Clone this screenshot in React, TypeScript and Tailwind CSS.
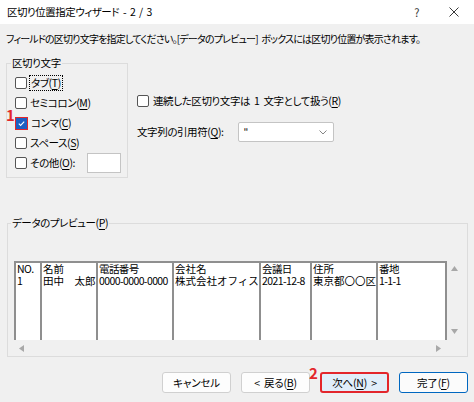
import React from 'react';

type Column = { width: string; head: string; value: string; latin?: boolean };

const columns: Column[] = [
  { width: 'w-[26px]', head: 'NO.', value: '1', latin: true },
  { width: 'w-[56px]', head: '名前', value: '田中　太郎' },
  { width: 'w-[76px]', head: '電話番号', value: '0000-0000-0000', latin: true },
  { width: 'w-[87px]', head: '会社名', value: '株式会社オフィス' },
  { width: 'w-[51px]', head: '会議日', value: '2021-12-8', latin: true },
  { width: 'w-[66px]', head: '住所', value: '東京都〇〇区' },
  { width: 'w-[70px]', head: '番地', value: '1-1-1', latin: true },
];

function Key({ children }: { children: React.ReactNode }) {
  return <span className="underline underline-offset-[2px]">{children}</span>;
}

function CheckBox({ checked = false }: { checked?: boolean }) {
  if (checked) {
    return (
      <span className="flex h-[13px] w-[13px] shrink-0 items-center justify-center border-[1.5px] border-[#e3262c] bg-[#1d5fc4]">
        <svg viewBox="0 0 10 10" className="h-[9px] w-[9px]">
          <path d="M2 5.2l2 2 4-4.4" fill="none" stroke="#fff" strokeWidth="1.2" />
        </svg>
      </span>
    );
  }
  return <span className="h-[12px] w-[12px] shrink-0 rounded-[2px] border border-[#555] bg-white" />;
}

function Arrow({ dir }: { dir: 'up' | 'down' | 'left' | 'right' }) {
  const points = {
    up: '0,5 3.5,0 7,5',
    down: '0,0 3.5,5 7,0',
    left: '5,0 0,3.5 5,7',
    right: '0,0 5,3.5 0,7',
  }[dir];
  const size = dir === 'up' || dir === 'down' ? 'h-[5px] w-[7px]' : 'h-[7px] w-[5px]';
  const box = dir === 'up' || dir === 'down' ? '0 0 7 5' : '0 0 5 7';
  return (
    <svg viewBox={box} className={size}>
      <polygon points={points} fill="#a8a8a8" />
    </svg>
  );
}

function Button({ children, variant = 'normal' }: { children: React.ReactNode; variant?: 'normal' | 'marked' | 'default' }) {
  const style =
    variant === 'marked'
      ? 'border-2 border-[#e3262c] bg-[#e1eefa]'
      : variant === 'default'
        ? 'border border-[#0067c0] bg-[#fbfbfb]'
        : 'border border-[#d0d0d0] bg-[#fdfdfd]';
  return (
    <div className={`relative flex h-[21px] w-[69px] items-center justify-center whitespace-pre rounded-[3px] tracking-[-0.2px] ${style}`}>
      {children}
    </div>
  );
}

export default function App() {
  return (
    <div className="flex h-[402px] w-[474px] flex-col overflow-hidden bg-[#f0f0f0] font-['Noto_Sans_CJK_JP','Noto_Sans',sans-serif] text-[10.5px] leading-[14px] tracking-[-0.4px] text-black [font-feature-settings:'palt'] [word-spacing:2px]">
      {/* title bar */}
      <div className="flex h-[24px] shrink-0 items-center bg-white pl-[7px]">
        <span className="whitespace-pre tracking-[-0.5px]">区切り位置指定ウィザード - 2 / 3</span>
        <span className="ml-auto mr-[30px] text-[11px] text-[#333]">?</span>
        <svg viewBox="0 0 10 10" className="mr-[15px] h-[10px] w-[10px]">
          <path d="M0.5 0.5l9 9M9.5 0.5l-9 9" stroke="#222" strokeWidth="0.9" />
        </svg>
      </div>

      <div className="flex flex-col pl-[6px] pt-[8px]">
        <p className="whitespace-nowrap text-[10px] tracking-[-0.8px]">
          フィールドの区切り文字を指定してください。[データのプレビュー] ボックスには区切り位置が表示されます。
        </p>

        <div className="mt-[10px] flex items-start gap-[9px]">
          <fieldset className="w-[122px] border border-[#dcdcdc]">
            <legend className="ml-[4px] px-[1px]">区切り文字</legend>
            <div className="flex flex-col pb-[4px] pl-[8px] pr-[6px] pt-[3px]">
              <div className="flex h-[20px] items-center gap-[2px]">
                <CheckBox />
                <span className="border border-dotted border-black px-[1px]">
                  タブ(<Key>T</Key>)
                </span>
              </div>
              <div className="flex h-[20px] items-center gap-[3px]">
                <CheckBox />
                <span>
                  セミコロン(<Key>M</Key>)
                </span>
              </div>
              <div className="relative flex h-[20px] items-center gap-[3px]">
                <span className="absolute left-[-9px] top-[-6px] text-[15px] font-bold leading-none text-[#e3262c]">1</span>
                <CheckBox checked />
                <span>
                  コンマ(<Key>C</Key>)
                </span>
              </div>
              <div className="flex h-[20px] items-center gap-[3px]">
                <CheckBox />
                <span>
                  スペース(<Key>S</Key>)
                </span>
              </div>
              <div className="flex h-[20px] items-center gap-[3px]">
                <CheckBox />
                <span>
                  その他(<Key>O</Key>):
                </span>
                <span className="ml-auto h-[20px] w-[34px] border border-[#c4c4c4] bg-white" />
              </div>
            </div>
          </fieldset>

          <div className="flex flex-col">
            <div className="mt-[38px] flex items-center gap-[4px]">
              <CheckBox />
              <span className="whitespace-pre">
                連続した区切り文字は 1 文字として扱う(<Key>R</Key>)
              </span>
            </div>
            <div className="mt-[14px] flex items-center gap-[14px]">
              <span>
                文字列の引用符(<Key>Q</Key>):
              </span>
              <div className="flex h-[20px] w-[96px] items-center justify-between rounded-[2px] border border-[#c4c4c4] bg-white pl-[5px] pr-[6px]">
                <span className="text-[10px]">"</span>
                <svg viewBox="0 0 8 5" className="h-[5px] w-[8px]">
                  <path d="M0.5 0.5l3.5 3.5 3.5-3.5" fill="none" stroke="#777" strokeWidth="0.9" />
                </svg>
              </div>
            </div>
          </div>
        </div>

        <fieldset className="ml-[1px] mt-[38px] w-[461px] border border-[#dcdcdc]">
          <legend className="ml-[3px] px-[1px]">
            データのプレビュー(<Key>P</Key>)
          </legend>
          <div className="pl-[6px] pt-[31px]">
            <div className="flex">
              <div className="flex h-[79px] w-[433px] border-r-2 border-t-2 border-[#8f8f8f] bg-white">
                {columns.map((col) => (
                  <div key={col.head} className={`${col.width} shrink-0 border-l-2 border-[#8f8f8f] pl-[1px] text-[10.5px] leading-[11.5px] tracking-normal [word-spacing:0px] [font-feature-settings:normal]`}>
                    <div className={col.latin ? 'tracking-[-0.6px]' : ''}>{col.head}</div>
                    <div className={`whitespace-nowrap ${col.latin ? 'tracking-[-0.6px]' : ''}`}>{col.value}</div>
                  </div>
                ))}
              </div>
              <div className="flex w-[15px] flex-col items-center justify-between pb-[6px] pt-[5px]">
                <Arrow dir="up" />
                <Arrow dir="down" />
              </div>
            </div>
            <div className="flex h-[16px] w-[433px] items-center justify-between pl-[5px] pr-[6px]">
              <Arrow dir="left" />
              <Arrow dir="right" />
            </div>
          </div>
        </fieldset>

        <div className="mt-[15px] flex justify-end gap-[10px] pr-[6px]">
          <Button>キャンセル</Button>
          <Button>
            &lt; 戻る(<Key>B</Key>)
          </Button>
          <Button variant="marked">
            <span className="absolute left-[-13px] top-[-9px] text-[15px] font-bold leading-none text-[#e3262c]">2</span>
            次へ(<Key>N</Key>) &gt;
          </Button>
          <Button variant="default">
            完了(<Key>F</Key>)
          </Button>
        </div>
      </div>
    </div>
  );
}
